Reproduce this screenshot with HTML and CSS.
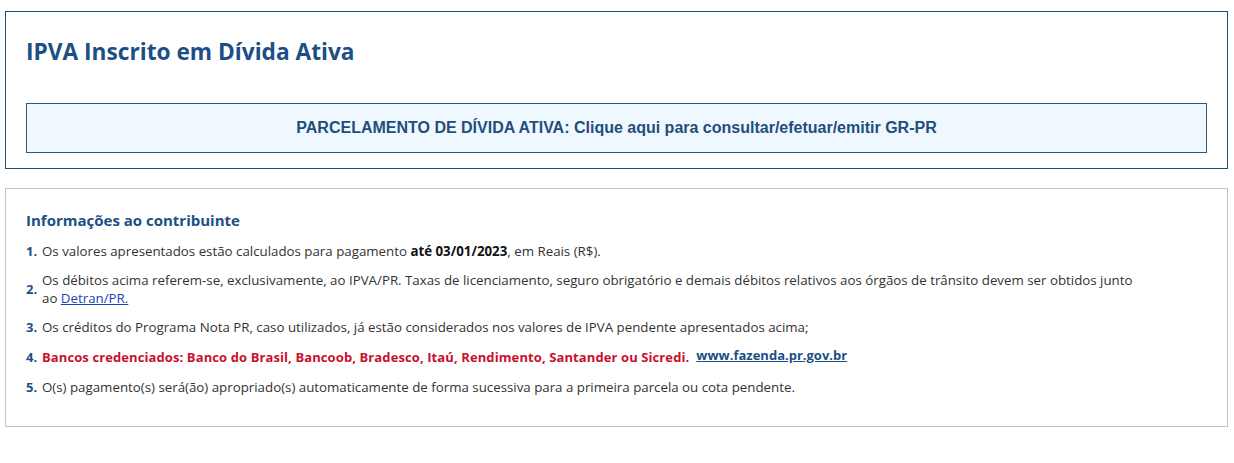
FILE: index.html
```html
<!DOCTYPE html>
<html lang="pt-BR">
<head>
<meta charset="utf-8">
<title>IPVA Inscrito em Dívida Ativa</title>
<link rel="stylesheet" href="styles.css">
</head>
<body>
<div class="page">
  <section class="panel panel-main">
    <h1 class="title">IPVA Inscrito em Dívida Ativa</h1>
    <a class="btn-parcel" href="#">PARCELAMENTO DE DÍVIDA ATIVA: Clique aqui para consultar/efetuar/emitir GR-PR</a>
  </section>

  <section class="panel panel-info">
    <h2 class="info-title">Informações ao contribuinte</h2>
    <table class="info-list">
      <tr class="r1">
        <td class="num">1.</td>
        <td class="txt">Os valores apresentados estão calculados para pagamento <b class="strong">até 03/01/2023</b>, em Reais (R$).</td>
      </tr>
      <tr class="r2">
        <td class="num">2.</td>
        <td class="txt">Os débitos acima referem-se, exclusivamente, ao IPVA/PR. Taxas de licenciamento, seguro obrigatório e demais débitos relativos aos órgãos de trânsito devem ser obtidos junto ao <a class="link" href="#">Detran/PR.</a></td>
      </tr>
      <tr class="r3">
        <td class="num">3.</td>
        <td class="txt">Os créditos do Programa Nota PR, caso utilizados, já estão considerados nos valores de IPVA pendente apresentados acima;</td>
      </tr>
      <tr class="r4">
        <td class="num">4.</td>
        <td class="txt"><span class="red">Bancos credenciados: Banco do Brasil, Bancoob, Bradesco, Itaú, Rendimento, Santander ou Sicredi.</span><a class="site" href="#">www.fazenda.pr.gov.br</a></td>
      </tr>
      <tr class="r5">
        <td class="num">5.</td>
        <td class="txt">O(s) pagamento(s) será(ão) apropriado(s) automaticamente de forma sucessiva para a primeira parcela ou cota pendente.</td>
      </tr>
    </table>
  </section>
</div>
</body>
</html>
```

FILE: styles.css
```css
* { box-sizing: border-box; }
html, body { margin: 0; padding: 0; background: #fff; }
body {
  font-family: "Open Sans", "Noto Sans", sans-serif;
  color: #333;
}
.page {
  padding: 11px 6px 0 5px;
  display: flex;
  flex-direction: column;
  gap: 19px;
}
.panel {
  background: #fff;
}
.panel-main {
  border: 1px solid #1f4f6e;
  padding: 24px 20px 15px 20px;
}
.title {
  margin: 0 0 35px 0;
  font-size: 22.7px;
  line-height: 32px;
  font-weight: 700;
  color: #1b4f85;
}
.btn-parcel {
  display: flex;
  align-items: center;
  justify-content: center;
  height: 50px;
  background: #f0f8ff;
  border: 1px solid #2f5673;
  color: #1f4e7a;
  font-family: "Liberation Sans", Arial, sans-serif;
  font-weight: 700;
  font-size: 16px;
  text-decoration: none;
}
.panel-info {
  border: 1px solid #c3c3c3;
  padding: 21px 20px 28px 20px;
  height: 239px;
}
.info-title {
  margin: 0 0 6px 0;
  font-size: 15px;
  line-height: 20px;
  font-weight: 700;
  color: #1b4f85;
}
.info-list {
  border-collapse: collapse;
  width: 1122px;
  font-size: 13.3px;
  line-height: 18px;
}
.info-list td {
  padding: 6px 0;
  vertical-align: middle;
}
.info-list .r1 td { padding-bottom: 5px; }
.info-list .r3 td { padding-top: 5px; }
.info-list .num {
  width: 16px;
  font-weight: 700;
  color: #1b4f85;
  font-size: 13px;
  padding-right: 0;
}
.strong { color: #111; font-weight: 700; }
.link { color: #1a3fb8; text-decoration: underline; }
.red { color: #c8102e; font-weight: 700; font-size: 13px; letter-spacing: 0.1px; }
.site {
  margin-left: 7px;
  color: #1b4f85;
  font-weight: 700;
  font-size: 13px;
  text-decoration: underline;
  position: relative;
  top: -2px;
}
```
